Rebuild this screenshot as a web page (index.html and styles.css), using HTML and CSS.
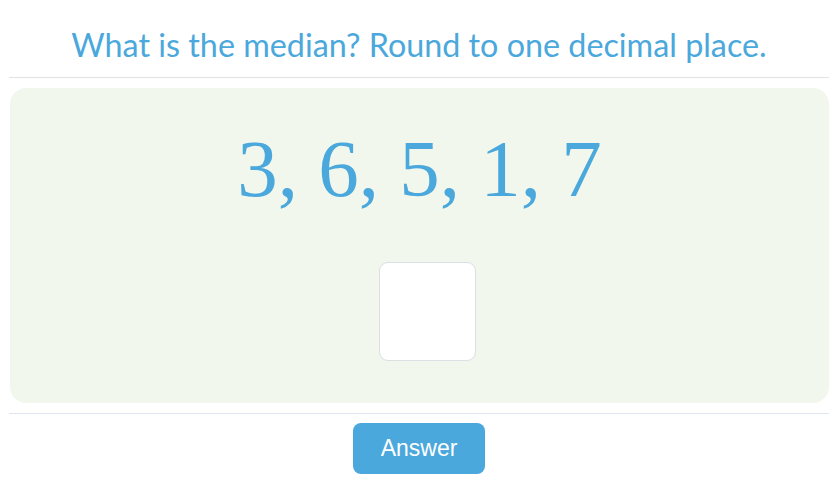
FILE: index.html
```html
<!DOCTYPE html>
<html>
<head>
<meta charset="utf-8">
<link rel="stylesheet" href="styles.css">
</head>
<body>
<div class="page">
  <h1 class="question">What is the median? Round to one decimal place.</h1>
  <hr class="rule rule-top">
  <div class="panel">
    <div class="numbers">3, 6, 5, 1, 7</div>
    <div class="answer-box"></div>
  </div>
  <hr class="rule rule-bottom">
  <div class="actions">
    <button class="btn">Answer</button>
  </div>
</div>
</body>
</html>
```
FILE: styles.css
```css
html, body {
  margin: 0;
  padding: 0;
  background: #ffffff;
}
.page {
  padding: 0 11px 0 9px;
  display: flex;
  flex-direction: column;
}
.question {
  margin: 0;
  padding-top: 27px;
  height: 77px;
  box-sizing: border-box;
  font-family: "Lato", "Open Sans", sans-serif;
  font-weight: 400;
  font-size: 32.3px;
  line-height: 36px;
  color: #4aa8dc;
  text-align: center;
}
.rule {
  margin: 0;
  border: 0;
  height: 1px;
}
.rule-top {
  background: #e2e2e2;
}
.rule-bottom {
  background: #dde6ee;
}
.panel {
  margin: 10px 0 10px 1px;
  height: 315px;
  background: #f1f7ec;
  border-radius: 16px;
  display: flex;
  flex-direction: column;
  align-items: center;
}
.numbers {
  margin-top: 31px;
  font-family: "Liberation Serif", "Times New Roman", serif;
  font-size: 81px;
  line-height: 100px;
  color: #4aa8dc;
}
.answer-box {
  margin-top: 43px;
  margin-left: 16px;
  width: 95px;
  height: 97px;
  background: #ffffff;
  border: 1px solid #dcdfe3;
  border-radius: 9px;
}
.actions {
  display: flex;
  justify-content: center;
  padding-top: 9px;
}
.btn {
  width: 132px;
  height: 51px;
  border: 0;
  border-radius: 8px;
  background: #4aa8dc;
  color: #ffffff;
  font-family: "Liberation Sans", Arial, sans-serif;
  font-size: 23px;
  padding: 0;
}
```
